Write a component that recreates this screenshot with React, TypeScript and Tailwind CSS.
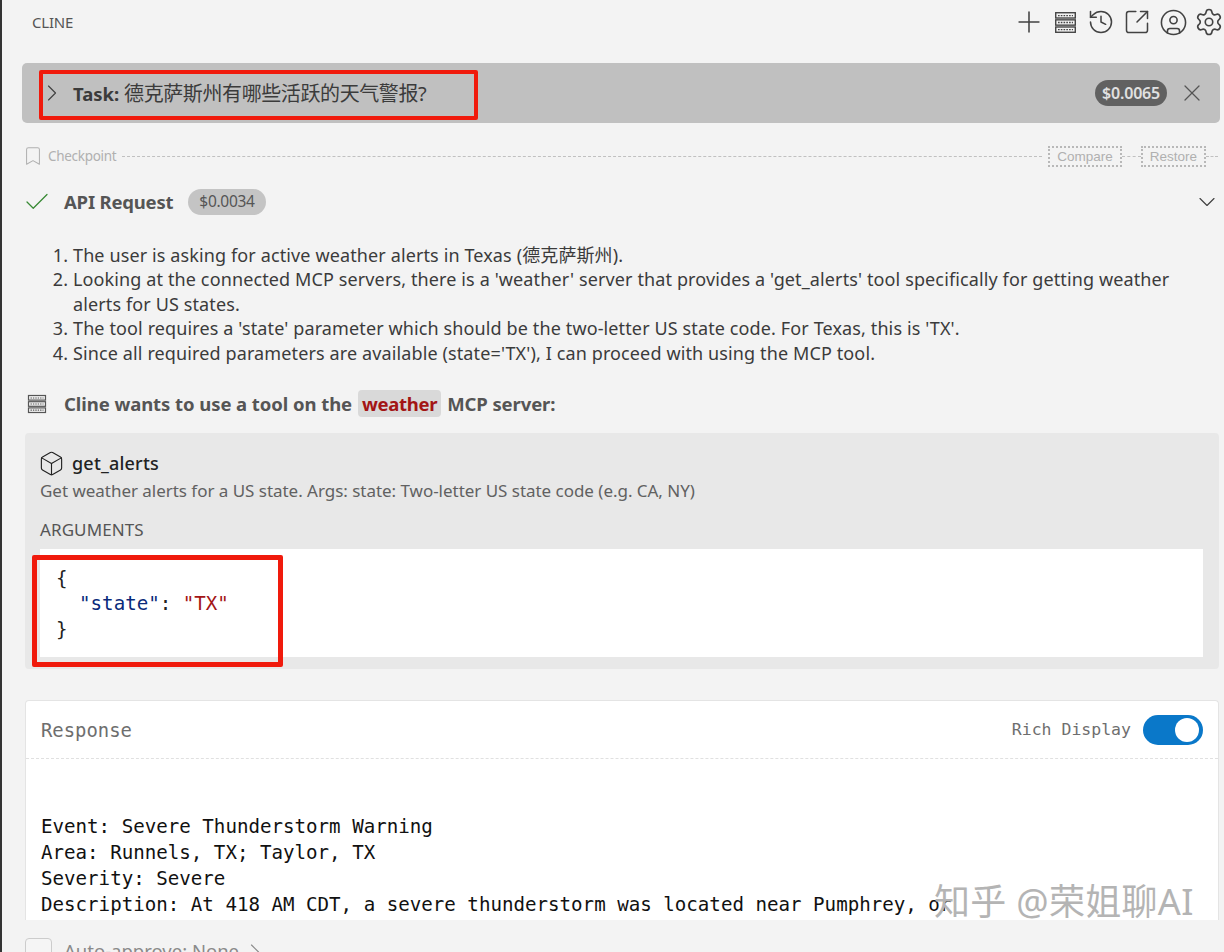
import React from 'react';
import { Box, Bookmark, Check, ChevronDown, ChevronRight, CircleUser, History, Plus, Settings, SquareArrowOutUpRight, X } from 'lucide-react';

const uiFont = "font-['Noto_Sans','Noto_Sans_CJK_SC',sans-serif]";
const monoFont = "font-['DejaVu_Sans_Mono',monospace]";

const ServerIcon: React.FC<{ className?: string }> = ({ className }) => (
  <svg viewBox="0 0 20 20" fill="none" stroke="currentColor" strokeWidth="1.2" className={className}>
    <rect x="1.5" y="1.5" width="17" height="4.6" />
    <rect x="1.5" y="7.7" width="17" height="4.6" />
    <rect x="1.5" y="13.9" width="17" height="4.6" />
    <path d="M3.5 4h13M3.5 10h13M3.5 16.2h13" strokeDasharray="1.4 1" />
  </svg>
);

const steps = [
  'The user is asking for active weather alerts in Texas (德克萨斯州).',
  "Looking at the connected MCP servers, there is a 'weather' server that provides a 'get_alerts' tool specifically for getting weather alerts for US states.",
  "The tool requires a 'state' parameter which should be the two-letter US state code. For Texas, this is 'TX'.",
  "Since all required parameters are available (state='TX'), I can proceed with using the MCP tool.",
];

const responseLines = [
  'Event: Severe Thunderstorm Warning',
  'Area: Runnels, TX; Taylor, TX',
  'Severity: Severe',
  'Description: At 418 AM CDT, a severe thunderstorm was located near Pumphrey, or',
];

const App: React.FC = () => {
  return (
    <div className={`${uiFont} relative flex h-[952px] w-[1224px] flex-col overflow-hidden border-l-2 border-[#333333] bg-[#f3f3f3] text-[18px] text-[#3b3b3b]`}>
      <header className="flex h-[44px] shrink-0 items-center justify-between pl-[30px]">
        <span className="text-[15px] tracking-[-0.2px] text-[#555555]">CLINE</span>
        <div className="flex items-center text-[#424242]">
          <Plus className="h-[34px] w-[34px]" strokeWidth={1.1} />
          <ServerIcon className="ml-[8px] h-[23px] w-[23px]" />
          <History className="ml-[10px] h-[28px] w-[28px]" strokeWidth={1.3} />
          <SquareArrowOutUpRight className="ml-[8px] h-[28px] w-[28px]" strokeWidth={1.3} />
          <CircleUser className="ml-[8px] h-[29px] w-[29px]" strokeWidth={1.3} />
          <Settings className="ml-[6px] h-[30px] w-[30px]" strokeWidth={1.3} />
        </div>
      </header>

      <div className="mt-[19px] ml-[20px] mr-[4px] flex h-[60px] shrink-0 items-center rounded-[5px] bg-[#c0c0c0] pl-[16px] pr-[14px]">
        <ChevronRight className="h-[28px] w-[28px] text-[#424242]" strokeWidth={1} />
        <span className="ml-[7px] pt-px text-[18.5px]">
          <b className="font-bold">Task:</b> <span className="text-[20px] tracking-[-0.4px]">德克萨斯州有哪些活跃的天气警报?</span>
        </span>
        <span className="ml-auto rounded-full bg-[#616161] px-[7px] py-px text-[16px] font-semibold tracking-[-0.2px] text-[#e0e0e0]">$0.0065</span>
        <X className="ml-[11px] h-[28px] w-[28px] text-[#555555]" strokeWidth={1.1} />
      </div>

      <div className="mt-[21px] ml-[20px] mr-[6px] flex h-[24px] shrink-0 items-center text-[#b0b0b0]">
        <Bookmark className="h-[22px] w-[22px]" strokeWidth={1.1} />
        <span className="ml-[4px] text-[13.5px] tracking-[-0.3px]">Checkpoint</span>
        <div className="ml-[6px] flex-1 border-t border-dashed border-[#c0c0c0]" />
        <span className="ml-[6px] border-2 border-dotted border-[#b8b8b8] px-[7px] font-['Liberation_Sans',sans-serif] text-[13.5px] leading-[17px]">Compare</span>
        <div className="w-[19px] border-t border-dashed border-[#c0c0c0]" />
        <span className="border-2 border-dotted border-[#b8b8b8] px-[7px] font-['Liberation_Sans',sans-serif] text-[13.5px] leading-[17px]">Restore</span>
        <div className="w-[12px] border-t border-dashed border-[#c0c0c0]" />
      </div>

      <div className="mt-[19px] ml-[20px] mr-[3px] flex h-[30px] shrink-0 items-center">
        <Check className="h-[30px] w-[30px] text-[#388a34]" strokeWidth={1} />
        <span className="ml-[12px] text-[18.5px] font-bold tracking-[-0.2px] text-[#555555]">API Request</span>
        <span className="ml-[15px] rounded-full bg-[#c4c4c4] px-[11px] py-[1px] text-[15.5px] tracking-[-0.3px] text-[#555555]">$0.0034</span>
        <ChevronDown className="ml-auto h-[28px] w-[28px] text-[#424242]" strokeWidth={1} />
      </div>

      <ol className="mt-[25.7px] mr-[30px] ml-[71px] shrink-0 list-decimal text-[18px] leading-[24.5px] tracking-[0.12px] text-[#3b3b3b]">
        {steps.map((step) => (
          <li key={step}>{step}</li>
        ))}
      </ol>

      <div className="mt-[22.35px] ml-[25px] flex h-[32px] shrink-0 items-center text-[#555555]">
        <ServerIcon className="h-[20px] w-[20px]" />
        <span className="ml-[17px] text-[18.5px] font-bold tracking-[-0.07px]">Cline wants to use a tool on the</span>
        <span className="ml-[6px] rounded-[4px] bg-[#d9d9d9] px-[4px] text-[18.5px] font-bold tracking-[-0.32px] text-[#a31515]">weather</span>
        <span className="ml-[6px] text-[18.5px] font-bold tracking-[-0.1px]">MCP server:</span>
      </div>

      <section className="mt-[13px] ml-[23px] mr-[5px] h-[236px] shrink-0 rounded-[4px] bg-[#e8e8e8] pl-[15px] pr-[16px] pt-[17px]">
        <div className="flex h-[28px] items-center text-[#222222]">
          <Box className="-ml-[2px] h-[27px] w-[27px]" strokeWidth={1} />
          <span className="ml-[7px] text-[18px] font-medium tracking-[0.2px]">get_alerts</span>
        </div>
        <p className="text-[17px] leading-[26px] tracking-[-0.03px] text-[#616161]">
          Get weather alerts for a US state. Args: state: Two-letter US state code (e.g. CA, NY)
        </p>
        <p className="mt-[13px] text-[17px] leading-[26px] tracking-[0.1px] text-[#555555]">ARGUMENTS</p>
        <pre className={`${monoFont} mt-[6px] h-[108px] bg-white pl-[16px] pt-[17px] text-[19.15px] leading-[25.5px] text-[#222222]`}>
          {'{\n  '}
          <span className="text-[#0a2a7a]">"state"</span>
          {': '}
          <span className="text-[#a31515]">"TX"</span>
          {'\n}'}
        </pre>
      </section>

      <section className="mt-[31px] ml-[23px] mr-[5px] h-[220px] shrink-0 overflow-hidden rounded-t-[4px] border-x border-t border-[#e4e4e4] bg-white">
        <div className="flex h-[58px] items-center justify-between border-b border-dashed border-[#e0e0e0] pl-[15px] pr-[15px] pt-[2px]">
          <span className={`${monoFont} text-[18.9px] text-[#6e6e6e]`}>Response</span>
          <div className="flex items-center">
            <span className={`${monoFont} text-[16.5px] text-[#6e6e6e]`}>Rich Display</span>
            <span className="ml-[12px] flex h-[30px] w-[60px] items-center justify-end rounded-full bg-[#0a78c9] pr-[4px]">
              <span className="h-[24px] w-[24px] rounded-full bg-white" />
            </span>
          </div>
        </div>
        <pre className={`${monoFont} whitespace-pre pl-[15px] pt-[55px] text-[19.15px] leading-[26px] text-[#111111]`}>
          {responseLines.join('\n')}
        </pre>
      </section>

      <div className="mt-[18px] ml-[23px] flex shrink-0 items-start">
        <span className="h-[30px] w-[27px] rounded-[4px] border border-[#cccccc] bg-[#f5f5f5]" />
        <span className="mt-[4px] ml-[12px] text-[18.5px] leading-[18px] text-[#8a8a8a]">Auto-approve: None</span>
        <ChevronRight className="ml-[2px] h-[28px] w-[28px] text-[#8a8a8a]" strokeWidth={1} />
      </div>

      {/* red annotation boxes and the site watermark sit over the capture */}
      <div className="absolute top-[70px] left-[37px] h-[50px] w-[439px] rounded-[2px] border-[4px] border-[#f01a0c]" />
      <div className="absolute top-[555px] left-[30px] h-[112px] w-[251px] rounded-[2px] border-[5px] border-[#f01a0c]" />
      <div className="absolute top-[877px] left-[932px] text-[36px] leading-[50px] tracking-[0.3px] text-[#b4b4b4]">知乎 @荣姐聊AI</div>
    </div>
  );
};

export default App;
